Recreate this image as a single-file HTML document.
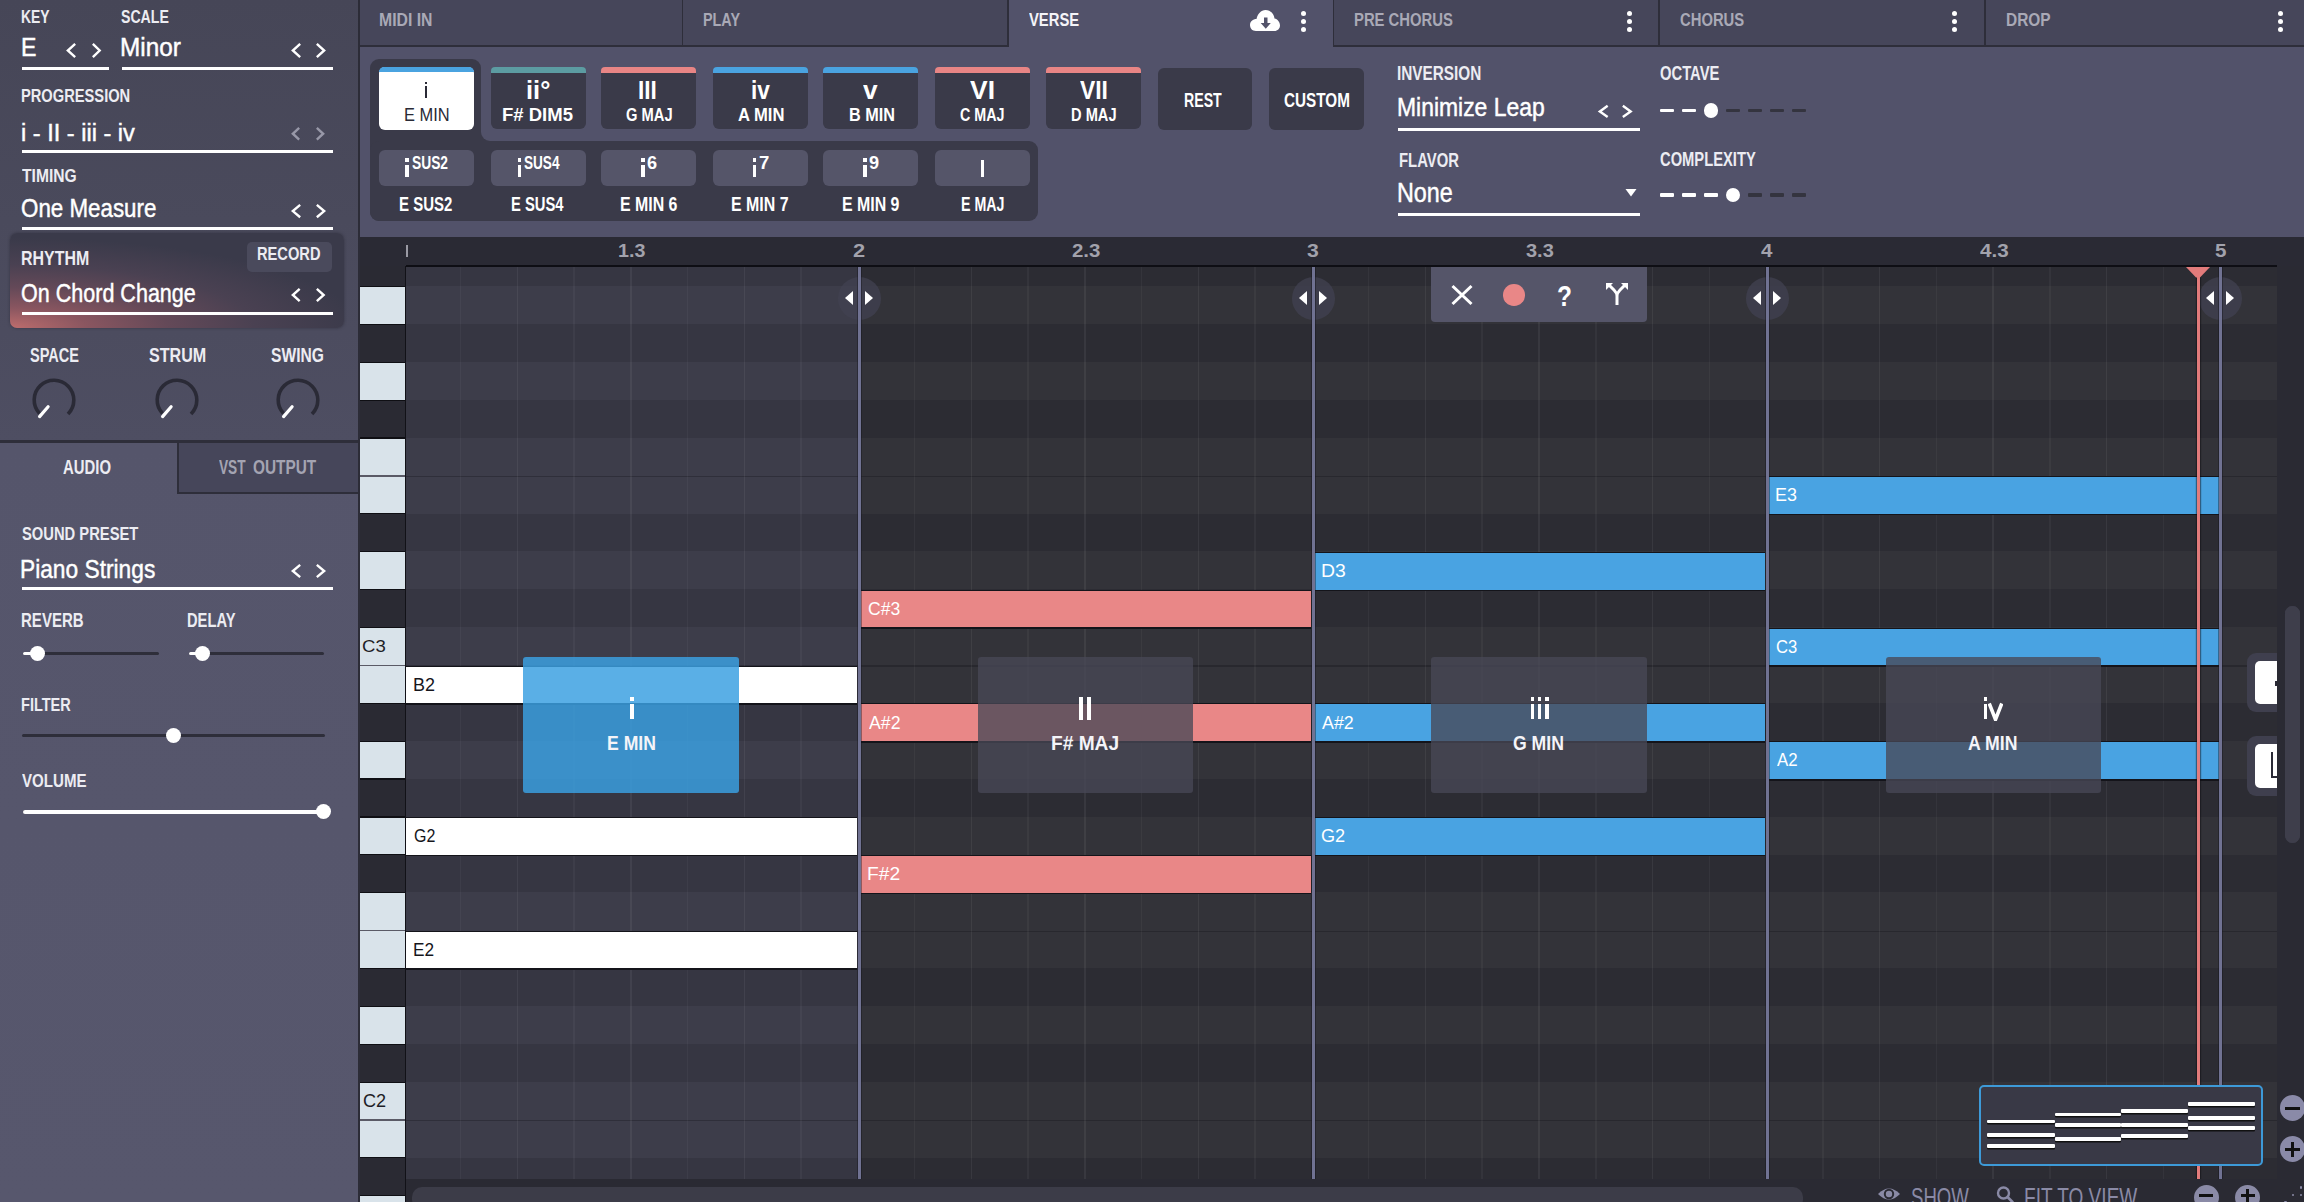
<!DOCTYPE html>
<html><head><meta charset="utf-8"><style>
html,body{margin:0;padding:0;width:2304px;height:1202px;overflow:hidden;background:#2a2a33;}
.r{position:absolute;display:block;}
.t{position:absolute;white-space:nowrap;line-height:1;font-family:"Liberation Sans",sans-serif;transform-origin:0 0;}
</style></head><body>
<div class="r" style="left:0.00px;top:0.00px;width:358.00px;height:442.00px;background:linear-gradient(to bottom,#464657 0%,#4a4a5c 50%,#4e4e62 100%);"></div>
<div class="r" style="left:0.00px;top:442.00px;width:358.00px;height:760.00px;background:linear-gradient(to bottom,#55556b 0%,#57576d 100%);"></div>
<div class="r" style="left:358.00px;top:0.00px;width:1.50px;height:1202.00px;background:#2c2c37;"></div>
<div class="t" style="left:21.49px;top:8.08px;font-size:18.26px;font-weight:bold;color:#ececf2;transform:scaleX(0.763);">KEY</div>
<div class="t" style="left:121.38px;top:8.08px;font-size:18.26px;font-weight:bold;color:#ececf2;transform:scaleX(0.774);">SCALE</div>
<div class="t" style="left:20.55px;top:34.99px;font-size:25.07px;color:#fff;transform:scaleX(0.922);-webkit-text-stroke:0.45px #fff;">E</div>
<div class="t" style="left:120.25px;top:34.99px;font-size:25.07px;color:#fff;transform:scaleX(0.970);-webkit-text-stroke:0.45px #fff;">Minor</div>
<svg class="r" style="left:65.00px;top:41.00px;" width="13.00" height="19.00" viewBox="0 0 13.00 19.00"><polyline points="10.16,2.84 2.84,9.50 10.16,16.16" fill="none" stroke="#fff" stroke-width="2.40" stroke-linecap="butt" stroke-linejoin="miter"/></svg>
<svg class="r" style="left:90.00px;top:41.00px;" width="12.50" height="19.00" viewBox="0 0 12.50 19.00"><polyline points="2.84,2.84 9.66,9.50 2.84,16.16" fill="none" stroke="#fff" stroke-width="2.40" stroke-linecap="butt" stroke-linejoin="miter"/></svg>
<div class="r" style="left:22.00px;top:67.00px;width:87.00px;height:3.00px;background:#fff;"></div>
<svg class="r" style="left:289.50px;top:41.00px;" width="13.00" height="19.00" viewBox="0 0 13.00 19.00"><polyline points="10.16,2.84 2.84,9.50 10.16,16.16" fill="none" stroke="#fff" stroke-width="2.40" stroke-linecap="butt" stroke-linejoin="miter"/></svg>
<svg class="r" style="left:313.50px;top:41.00px;" width="13.00" height="19.00" viewBox="0 0 13.00 19.00"><polyline points="2.84,2.84 10.16,9.50 2.84,16.16" fill="none" stroke="#fff" stroke-width="2.40" stroke-linecap="butt" stroke-linejoin="miter"/></svg>
<div class="r" style="left:122.00px;top:67.00px;width:210.50px;height:3.00px;background:#fff;"></div>
<div class="t" style="left:21.45px;top:86.99px;font-size:18.84px;font-weight:bold;color:#ececf2;transform:scaleX(0.779);">PROGRESSION</div>
<div class="t" style="left:20.87px;top:120.67px;font-size:23.91px;color:#fff;transform:scaleX(0.985);-webkit-text-stroke:0.45px #fff;">i - II - iii - iv</div>
<svg class="r" style="left:290.00px;top:125.00px;" width="12.00" height="17.50" viewBox="0 0 12.00 17.50"><polyline points="9.16,2.84 2.84,8.75 9.16,14.66" fill="none" stroke="#9898a8" stroke-width="2.40" stroke-linecap="butt" stroke-linejoin="miter"/></svg>
<svg class="r" style="left:314.00px;top:125.00px;" width="12.00" height="17.50" viewBox="0 0 12.00 17.50"><polyline points="2.84,2.84 9.16,8.75 2.84,14.66" fill="none" stroke="#9898a8" stroke-width="2.40" stroke-linecap="butt" stroke-linejoin="miter"/></svg>
<div class="r" style="left:22.00px;top:149.80px;width:310.50px;height:3.00px;background:#fff;"></div>
<div class="t" style="left:22.24px;top:168.15px;font-size:17.83px;font-weight:bold;color:#ececf2;transform:scaleX(0.876);">TIMING</div>
<div class="t" style="left:21.39px;top:195.92px;font-size:25.51px;color:#fff;transform:scaleX(0.876);-webkit-text-stroke:0.45px #fff;">One Measure</div>
<svg class="r" style="left:289.50px;top:201.50px;" width="13.00" height="18.10" viewBox="0 0 13.00 18.10"><polyline points="10.16,2.84 2.84,9.05 10.16,15.26" fill="none" stroke="#fff" stroke-width="2.40" stroke-linecap="butt" stroke-linejoin="miter"/></svg>
<svg class="r" style="left:313.50px;top:201.50px;" width="13.00" height="18.10" viewBox="0 0 13.00 18.10"><polyline points="2.84,2.84 10.16,9.05 2.84,15.26" fill="none" stroke="#fff" stroke-width="2.40" stroke-linecap="butt" stroke-linejoin="miter"/></svg>
<div class="r" style="left:22.00px;top:226.50px;width:310.50px;height:3.00px;background:#fff;"></div>
<div class="r" style="left:10.00px;top:233.00px;width:333.50px;height:95.00px;background:radial-gradient(ellipse 105% 95% at 0% 100%,#bd6d6d 0%,#8a5660 22%,#644958 45%,#4a4152 70%,#3a3a4a 100%);border-radius:7px;box-shadow:0 0 3px rgba(30,30,40,0.5);"></div>
<div class="t" style="left:21.36px;top:247.75px;font-size:20.29px;font-weight:bold;color:#ececf2;transform:scaleX(0.786);">RHYTHM</div>
<div class="r" style="left:246.60px;top:241.60px;width:85.40px;height:30.70px;background:#4a4a5c;border-radius:5px;"></div>
<div class="t" style="left:256.65px;top:244.99px;font-size:18.84px;font-weight:bold;color:#ececf2;transform:scaleX(0.778);">RECORD</div>
<div class="t" style="left:21.43px;top:280.87px;font-size:25.22px;color:#fff;transform:scaleX(0.854);-webkit-text-stroke:0.45px #fff;">On Chord Change</div>
<svg class="r" style="left:290.00px;top:286.00px;" width="12.50" height="18.00" viewBox="0 0 12.50 18.00"><polyline points="9.66,2.84 2.84,9.00 9.66,15.16" fill="none" stroke="#fff" stroke-width="2.40" stroke-linecap="butt" stroke-linejoin="miter"/></svg>
<svg class="r" style="left:314.00px;top:286.00px;" width="12.50" height="18.00" viewBox="0 0 12.50 18.00"><polyline points="2.84,2.84 9.66,9.00 2.84,15.16" fill="none" stroke="#fff" stroke-width="2.40" stroke-linecap="butt" stroke-linejoin="miter"/></svg>
<div class="r" style="left:22.00px;top:311.50px;width:310.50px;height:3.00px;background:#fff;"></div>
<div class="t" style="left:29.56px;top:346.29px;font-size:19.42px;font-weight:bold;color:#ececf2;transform:scaleX(0.748);">SPACE</div>
<div class="t" style="left:148.52px;top:346.29px;font-size:19.42px;font-weight:bold;color:#ececf2;transform:scaleX(0.830);">STRUM</div>
<div class="t" style="left:270.53px;top:346.29px;font-size:19.42px;font-weight:bold;color:#ececf2;transform:scaleX(0.805);">SWING</div>
<svg class="r" style="left:24.30px;top:369.70px;" width="60.00" height="60.00" viewBox="0 0 60.00 60.00"><path d="M15.52 43.50 A19.80 19.80 0 1 1 44.00 44.00" fill="none" stroke="#2a2a36" stroke-width="3.6"/><line x1="24.10" y1="36.79" x2="15.57" y2="46.60" stroke="#fff" stroke-width="3.2" stroke-linecap="round"/></svg>
<svg class="r" style="left:146.70px;top:369.70px;" width="60.00" height="60.00" viewBox="0 0 60.00 60.00"><path d="M15.52 43.50 A19.80 19.80 0 1 1 44.00 44.00" fill="none" stroke="#2a2a36" stroke-width="3.6"/><line x1="24.10" y1="36.79" x2="15.57" y2="46.60" stroke="#fff" stroke-width="3.2" stroke-linecap="round"/></svg>
<svg class="r" style="left:267.50px;top:369.70px;" width="60.00" height="60.00" viewBox="0 0 60.00 60.00"><path d="M15.52 43.50 A19.80 19.80 0 1 1 44.00 44.00" fill="none" stroke="#2a2a36" stroke-width="3.6"/><line x1="24.10" y1="36.79" x2="15.57" y2="46.60" stroke="#fff" stroke-width="3.2" stroke-linecap="round"/></svg>
<div class="r" style="left:0.00px;top:440.00px;width:358.00px;height:2.50px;background:#2e2e3a;"></div>
<div class="r" style="left:177.70px;top:442.50px;width:180.30px;height:50.50px;background:#46465a;"></div>
<div class="r" style="left:177.00px;top:442.50px;width:1.50px;height:51.50px;background:#2e2e3a;"></div>
<div class="r" style="left:177.70px;top:492.00px;width:180.30px;height:2.00px;background:#2e2e3a;"></div>
<div class="t" style="left:62.63px;top:458.49px;font-size:19.42px;font-weight:bold;color:#ececf2;transform:scaleX(0.767);">AUDIO</div>
<div class="t" style="left:218.53px;top:458.49px;font-size:19.42px;font-weight:bold;color:#a4a4b2;transform:scaleX(0.704);">VST</div>
<div class="t" style="left:253.38px;top:458.49px;font-size:19.42px;font-weight:bold;color:#a4a4b2;transform:scaleX(0.793);">OUTPUT</div>
<div class="t" style="left:21.56px;top:524.60px;font-size:18.12px;font-weight:bold;color:#ececf2;transform:scaleX(0.814);">SOUND PRESET</div>
<div class="t" style="left:20.18px;top:555.63px;font-size:26.09px;color:#fff;transform:scaleX(0.872);-webkit-text-stroke:0.45px #fff;">Piano Strings</div>
<svg class="r" style="left:289.50px;top:561.80px;" width="13.00" height="18.00" viewBox="0 0 13.00 18.00"><polyline points="10.16,2.84 2.84,9.00 10.16,15.16" fill="none" stroke="#fff" stroke-width="2.40" stroke-linecap="butt" stroke-linejoin="miter"/></svg>
<svg class="r" style="left:313.50px;top:561.80px;" width="13.00" height="18.00" viewBox="0 0 13.00 18.00"><polyline points="2.84,2.84 10.16,9.00 2.84,15.16" fill="none" stroke="#fff" stroke-width="2.40" stroke-linecap="butt" stroke-linejoin="miter"/></svg>
<div class="r" style="left:22.00px;top:587.00px;width:310.50px;height:3.00px;background:#fff;"></div>
<div class="t" style="left:21.02px;top:609.75px;font-size:20.29px;font-weight:bold;color:#ececf2;transform:scaleX(0.741);">REVERB</div>
<div class="t" style="left:186.74px;top:609.75px;font-size:20.29px;font-weight:bold;color:#ececf2;transform:scaleX(0.725);">DELAY</div>
<div class="r" style="left:23.00px;top:651.70px;width:135.70px;height:3.20px;background:#2e2e3a;border-radius:2px;"></div>
<div class="r" style="left:23.00px;top:651.50px;width:14.00px;height:3.60px;background:#fff;border-radius:2px;"></div>
<div class="r" style="left:29.50px;top:645.80px;width:15.00px;height:15.00px;background:#fff;border-radius:50%;"></div>
<div class="r" style="left:188.70px;top:651.70px;width:135.80px;height:3.20px;background:#2e2e3a;border-radius:2px;"></div>
<div class="r" style="left:188.70px;top:651.50px;width:14.00px;height:3.60px;background:#fff;border-radius:2px;"></div>
<div class="r" style="left:195.20px;top:645.80px;width:15.00px;height:15.00px;background:#fff;border-radius:50%;"></div>
<div class="t" style="left:21.46px;top:697.15px;font-size:17.83px;font-weight:bold;color:#ececf2;transform:scaleX(0.815);">FILTER</div>
<div class="r" style="left:22.40px;top:734.30px;width:302.60px;height:3.20px;background:#2e2e3a;border-radius:2px;"></div>
<div class="r" style="left:165.80px;top:728.40px;width:15.00px;height:15.00px;background:#fff;border-radius:50%;"></div>
<div class="t" style="left:21.92px;top:772.39px;font-size:18.84px;font-weight:bold;color:#ececf2;transform:scaleX(0.801);">VOLUME</div>
<div class="r" style="left:23.00px;top:810.20px;width:300.50px;height:3.20px;background:#2e2e3a;border-radius:2px;"></div>
<div class="r" style="left:23.00px;top:810.00px;width:300.50px;height:3.60px;background:#fff;border-radius:2px;"></div>
<div class="r" style="left:316.00px;top:804.30px;width:15.00px;height:15.00px;background:#fff;border-radius:50%;"></div>
<div class="r" style="left:359.50px;top:0.00px;width:1944.50px;height:45.00px;background:#46465a;"></div>
<div class="r" style="left:359.50px;top:45.00px;width:1944.50px;height:1.50px;background:#2e2e3a;"></div>
<div class="r" style="left:1008.50px;top:0.00px;width:324.50px;height:46.50px;background:#52526a;"></div>
<div class="r" style="left:681.75px;top:0.00px;width:1.50px;height:46.00px;background:#2e2e3a;"></div>
<div class="r" style="left:1007.25px;top:0.00px;width:1.50px;height:46.00px;background:#2e2e3a;"></div>
<div class="r" style="left:1332.55px;top:0.00px;width:1.50px;height:46.00px;background:#2e2e3a;"></div>
<div class="r" style="left:1658.25px;top:0.00px;width:1.50px;height:46.00px;background:#2e2e3a;"></div>
<div class="r" style="left:1984.25px;top:0.00px;width:1.50px;height:46.00px;background:#2e2e3a;"></div>
<div class="t" style="left:378.57px;top:10.44px;font-size:19.13px;font-weight:bold;color:#a9a9b6;transform:scaleX(0.825);">MIDI IN</div>
<div class="t" style="left:703.46px;top:10.44px;font-size:19.13px;font-weight:bold;color:#a9a9b6;transform:scaleX(0.752);">PLAY</div>
<div class="t" style="left:1029.13px;top:10.44px;font-size:19.13px;font-weight:bold;color:#f4f4f8;transform:scaleX(0.774);">VERSE</div>
<div class="t" style="left:1354.34px;top:10.44px;font-size:19.13px;font-weight:bold;color:#a9a9b6;transform:scaleX(0.776);">PRE CHORUS</div>
<div class="t" style="left:1680.01px;top:10.44px;font-size:19.13px;font-weight:bold;color:#a9a9b6;transform:scaleX(0.775);">CHORUS</div>
<div class="t" style="left:2005.59px;top:10.44px;font-size:19.13px;font-weight:bold;color:#a9a9b6;transform:scaleX(0.809);">DROP</div>
<div class="r" style="left:1301.20px;top:10.50px;width:5.00px;height:5.00px;background:#fff;border-radius:50%;"></div>
<div class="r" style="left:1301.20px;top:18.70px;width:5.00px;height:5.00px;background:#fff;border-radius:50%;"></div>
<div class="r" style="left:1301.20px;top:26.90px;width:5.00px;height:5.00px;background:#fff;border-radius:50%;"></div>
<div class="r" style="left:1627.00px;top:10.50px;width:5.00px;height:5.00px;background:#fff;border-radius:50%;"></div>
<div class="r" style="left:1627.00px;top:18.70px;width:5.00px;height:5.00px;background:#fff;border-radius:50%;"></div>
<div class="r" style="left:1627.00px;top:26.90px;width:5.00px;height:5.00px;background:#fff;border-radius:50%;"></div>
<div class="r" style="left:1952.20px;top:10.50px;width:5.00px;height:5.00px;background:#fff;border-radius:50%;"></div>
<div class="r" style="left:1952.20px;top:18.70px;width:5.00px;height:5.00px;background:#fff;border-radius:50%;"></div>
<div class="r" style="left:1952.20px;top:26.90px;width:5.00px;height:5.00px;background:#fff;border-radius:50%;"></div>
<div class="r" style="left:2277.90px;top:10.50px;width:5.00px;height:5.00px;background:#fff;border-radius:50%;"></div>
<div class="r" style="left:2277.90px;top:18.70px;width:5.00px;height:5.00px;background:#fff;border-radius:50%;"></div>
<div class="r" style="left:2277.90px;top:26.90px;width:5.00px;height:5.00px;background:#fff;border-radius:50%;"></div>
<svg class="r" style="left:1249.00px;top:8.00px;" width="33.00" height="25.00" viewBox="0 0 33.00 25.00"><path d="M7 23 C3 23 1 20 1 17 C1 13.5 4 11 7.5 11 C8.5 6 12 2 16.5 2 C21.5 2 25 6 25.5 10.5 C28.5 11 31 14 31 17.5 C31 20.5 28.5 23 25.5 23 Z" fill="#fff"/><path d="M15 9.5 L18.5 9.5 L18.5 15 L21.8 15 L16.75 20.8 L11.7 15 L15 15 Z" fill="#52526a"/></svg>
<div class="r" style="left:359.50px;top:46.50px;width:1944.50px;height:190.30px;background:#52526a;"></div>
<div class="r" style="left:370.20px;top:59.30px;width:111.10px;height:161.30px;background:#3a3a49;border-radius:9px;"></div>
<div class="r" style="left:370.20px;top:141.40px;width:667.80px;height:79.20px;background:#3a3a49;border-radius:9px;"></div>
<div class="r" style="left:470.00px;top:131.00px;width:20.00px;height:14.00px;background:#3a3a49;"></div>
<div class="r" style="left:481.30px;top:131.40px;width:10.00px;height:10.00px;background:#52526a;border-bottom-left-radius:9px;"></div>
<div class="r" style="left:378.50px;top:66.50px;width:95.40px;height:63.50px;background:#fff;border-radius:6px;overflow:hidden;"></div>
<div class="r" style="left:378.50px;top:66.50px;width:95.40px;height:5.50px;background:#4aa3e0;border-radius:6px 6px 0 0;"></div>
<div class="r" style="left:424.60px;top:81.50px;width:2.80px;height:2.80px;background:#2a2a36;"></div>
<div class="r" style="left:424.60px;top:86.20px;width:2.80px;height:12.00px;background:#2a2a36;"></div>
<div class="t" style="left:403.68px;top:105.91px;font-size:18.70px;color:#2a2a36;transform:scaleX(0.880);">E MIN</div>
<div class="r" style="left:490.80px;top:66.80px;width:95.40px;height:62.50px;background:#3a3a49;border-radius:6px;"></div>
<div class="r" style="left:490.80px;top:66.80px;width:95.40px;height:6.00px;background:#5c9ca2;border-radius:4px 4px 0 0;"></div>
<div class="t" style="left:525.82px;top:77.71px;font-size:24.93px;font-weight:bold;color:#fff;transform:scaleX(1.022);">ii°</div>
<div class="t" style="left:501.50px;top:105.91px;font-size:18.70px;font-weight:bold;color:#fff;transform:scaleX(0.990);">F# DIM5</div>
<div class="r" style="left:601.00px;top:66.80px;width:95.40px;height:62.50px;background:#3a3a49;border-radius:6px;"></div>
<div class="r" style="left:601.00px;top:66.80px;width:95.40px;height:6.00px;background:#e88585;border-radius:4px 4px 0 0;"></div>
<div class="t" style="left:637.93px;top:77.71px;font-size:24.93px;font-weight:bold;color:#fff;transform:scaleX(0.905);">III</div>
<div class="t" style="left:625.91px;top:105.91px;font-size:18.70px;font-weight:bold;color:#fff;transform:scaleX(0.787);">G MAJ</div>
<div class="r" style="left:712.80px;top:66.80px;width:95.40px;height:62.50px;background:#3a3a49;border-radius:6px;"></div>
<div class="r" style="left:712.80px;top:66.80px;width:95.40px;height:6.00px;background:#4aa3e0;border-radius:4px 4px 0 0;"></div>
<div class="t" style="left:751.02px;top:77.71px;font-size:24.93px;font-weight:bold;color:#fff;transform:scaleX(0.908);">iv</div>
<div class="t" style="left:737.58px;top:105.91px;font-size:18.70px;font-weight:bold;color:#fff;transform:scaleX(0.890);">A MIN</div>
<div class="r" style="left:823.00px;top:66.80px;width:95.40px;height:62.50px;background:#3a3a49;border-radius:6px;"></div>
<div class="r" style="left:823.00px;top:66.80px;width:95.40px;height:6.00px;background:#4aa3e0;border-radius:4px 4px 0 0;"></div>
<div class="t" style="left:862.77px;top:77.71px;font-size:24.93px;font-weight:bold;color:#fff;transform:scaleX(1.053);">v</div>
<div class="t" style="left:848.95px;top:105.91px;font-size:18.70px;font-weight:bold;color:#fff;transform:scaleX(0.868);">B MIN</div>
<div class="r" style="left:935.00px;top:66.80px;width:95.40px;height:62.50px;background:#3a3a49;border-radius:6px;"></div>
<div class="r" style="left:935.00px;top:66.80px;width:95.40px;height:6.00px;background:#e88585;border-radius:4px 4px 0 0;"></div>
<div class="t" style="left:970.17px;top:77.71px;font-size:24.93px;font-weight:bold;color:#fff;transform:scaleX(1.061);">VI</div>
<div class="t" style="left:959.73px;top:105.91px;font-size:18.70px;font-weight:bold;color:#fff;transform:scaleX(0.765);">C MAJ</div>
<div class="r" style="left:1045.50px;top:66.80px;width:95.40px;height:62.50px;background:#3a3a49;border-radius:6px;"></div>
<div class="r" style="left:1045.50px;top:66.80px;width:95.40px;height:6.00px;background:#e88585;border-radius:4px 4px 0 0;"></div>
<div class="t" style="left:1079.59px;top:77.71px;font-size:24.93px;font-weight:bold;color:#fff;transform:scaleX(0.917);">VII</div>
<div class="t" style="left:1070.65px;top:105.91px;font-size:18.70px;font-weight:bold;color:#fff;transform:scaleX(0.783);">D MAJ</div>
<div class="r" style="left:1157.60px;top:67.50px;width:94.00px;height:62.00px;background:#3a3a49;border-radius:6px;"></div>
<div class="t" style="left:1184.48px;top:91.42px;font-size:19.86px;font-weight:bold;color:#fff;transform:scaleX(0.712);">REST</div>
<div class="r" style="left:1269.00px;top:67.50px;width:95.00px;height:62.00px;background:#3a3a49;border-radius:6px;"></div>
<div class="t" style="left:1283.89px;top:91.42px;font-size:19.86px;font-weight:bold;color:#fff;transform:scaleX(0.769);">CUSTOM</div>
<div class="r" style="left:378.50px;top:150.40px;width:95.40px;height:35.90px;background:#555569;border-radius:6px;"></div>
<div class="r" style="left:405.45px;top:158.20px;width:3.50px;height:3.60px;background:#fff;"></div>
<div class="r" style="left:405.45px;top:164.50px;width:3.50px;height:12.50px;background:#fff;"></div>
<div class="t" style="left:411.54px;top:155.09px;font-size:17.54px;font-weight:bold;color:#fff;transform:scaleX(0.786);">SUS2</div>
<div class="t" style="left:399.03px;top:194.38px;font-size:20.72px;font-weight:bold;color:#fff;transform:scaleX(0.723);">E SUS2</div>
<div class="r" style="left:490.80px;top:150.40px;width:95.40px;height:35.90px;background:#555569;border-radius:6px;"></div>
<div class="r" style="left:517.75px;top:158.20px;width:3.50px;height:3.60px;background:#fff;"></div>
<div class="r" style="left:517.75px;top:164.50px;width:3.50px;height:12.50px;background:#fff;"></div>
<div class="t" style="left:523.84px;top:155.09px;font-size:17.54px;font-weight:bold;color:#fff;transform:scaleX(0.775);">SUS4</div>
<div class="t" style="left:511.04px;top:194.38px;font-size:20.72px;font-weight:bold;color:#fff;transform:scaleX(0.713);">E SUS4</div>
<div class="r" style="left:601.00px;top:150.40px;width:95.40px;height:35.90px;background:#555569;border-radius:6px;"></div>
<div class="r" style="left:641.05px;top:158.20px;width:3.50px;height:3.60px;background:#fff;"></div>
<div class="r" style="left:641.05px;top:164.50px;width:3.50px;height:12.50px;background:#fff;"></div>
<div class="t" style="left:646.91px;top:155.09px;font-size:17.54px;font-weight:bold;color:#fff;transform:scaleX(1.035);">6</div>
<div class="t" style="left:619.76px;top:194.38px;font-size:20.72px;font-weight:bold;color:#fff;transform:scaleX(0.768);">E MIN 6</div>
<div class="r" style="left:712.80px;top:150.40px;width:95.40px;height:35.90px;background:#555569;border-radius:6px;"></div>
<div class="r" style="left:752.85px;top:158.20px;width:3.50px;height:3.60px;background:#fff;"></div>
<div class="r" style="left:752.85px;top:164.50px;width:3.50px;height:12.50px;background:#fff;"></div>
<div class="t" style="left:758.61px;top:155.09px;font-size:17.54px;font-weight:bold;color:#fff;transform:scaleX(1.056);">7</div>
<div class="t" style="left:731.46px;top:194.38px;font-size:20.72px;font-weight:bold;color:#fff;transform:scaleX(0.770);">E MIN 7</div>
<div class="r" style="left:823.00px;top:150.40px;width:95.40px;height:35.90px;background:#555569;border-radius:6px;"></div>
<div class="r" style="left:863.05px;top:158.20px;width:3.50px;height:3.60px;background:#fff;"></div>
<div class="r" style="left:863.05px;top:164.50px;width:3.50px;height:12.50px;background:#fff;"></div>
<div class="t" style="left:868.91px;top:155.09px;font-size:17.54px;font-weight:bold;color:#fff;transform:scaleX(1.035);">9</div>
<div class="t" style="left:841.76px;top:194.38px;font-size:20.72px;font-weight:bold;color:#fff;transform:scaleX(0.768);">E MIN 9</div>
<div class="r" style="left:935.00px;top:150.40px;width:95.40px;height:35.90px;background:#555569;border-radius:6px;"></div>
<div class="r" style="left:981.10px;top:159.50px;width:3.20px;height:17.50px;background:#fff;"></div>
<div class="t" style="left:960.78px;top:194.38px;font-size:20.72px;font-weight:bold;color:#fff;transform:scaleX(0.686);">E MAJ</div>
<div class="t" style="left:1397.31px;top:63.18px;font-size:20.72px;font-weight:bold;color:#ececf2;transform:scaleX(0.739);">INVERSION</div>
<div class="t" style="left:1397.07px;top:94.89px;font-size:25.07px;color:#fff;transform:scaleX(0.914);-webkit-text-stroke:0.45px #fff;">Minimize Leap</div>
<svg class="r" style="left:1597.00px;top:102.60px;" width="13.50" height="16.90" viewBox="0 0 13.50 16.90"><polyline points="10.66,2.84 2.84,8.45 10.66,14.06" fill="none" stroke="#fff" stroke-width="2.40" stroke-linecap="butt" stroke-linejoin="miter"/></svg>
<svg class="r" style="left:1620.00px;top:102.60px;" width="13.50" height="16.90" viewBox="0 0 13.50 16.90"><polyline points="2.84,2.84 10.66,8.45 2.84,14.06" fill="none" stroke="#fff" stroke-width="2.40" stroke-linecap="butt" stroke-linejoin="miter"/></svg>
<div class="r" style="left:1398.00px;top:128.00px;width:242.00px;height:2.50px;background:#fff;"></div>
<div class="t" style="left:1399.33px;top:149.75px;font-size:20.29px;font-weight:bold;color:#ececf2;transform:scaleX(0.732);">FLAVOR</div>
<div class="t" style="left:1397.13px;top:180.49px;font-size:26.96px;color:#fff;transform:scaleX(0.866);-webkit-text-stroke:0.45px #fff;">None</div>
<svg class="r" style="left:1625.00px;top:188.00px;" width="12.00" height="10.00" viewBox="0 0 12.00 10.00"><path d="M0.5 1 L11.5 1 L6 8.5 Z" fill="#fff"/></svg>
<div class="r" style="left:1398.00px;top:213.30px;width:242.00px;height:2.50px;background:#fff;"></div>
<div class="t" style="left:1659.61px;top:63.82px;font-size:19.86px;font-weight:bold;color:#ececf2;transform:scaleX(0.744);">OCTAVE</div>
<div class="t" style="left:1659.61px;top:149.48px;font-size:20.14px;font-weight:bold;color:#ececf2;transform:scaleX(0.732);">COMPLEXITY</div>
<div class="r" style="left:1660.20px;top:108.60px;width:14.00px;height:3.60px;background:#fff;border-radius:1px;"></div>
<div class="r" style="left:1682.20px;top:108.60px;width:14.00px;height:3.60px;background:#fff;border-radius:1px;"></div>
<div class="r" style="left:1703.90px;top:103.10px;width:14.60px;height:14.60px;background:#fff;border-radius:50%;"></div>
<div class="r" style="left:1726.20px;top:108.60px;width:14.00px;height:3.60px;background:#34343f;border-radius:1px;"></div>
<div class="r" style="left:1748.20px;top:108.60px;width:14.00px;height:3.60px;background:#34343f;border-radius:1px;"></div>
<div class="r" style="left:1770.20px;top:108.60px;width:14.00px;height:3.60px;background:#34343f;border-radius:1px;"></div>
<div class="r" style="left:1792.20px;top:108.60px;width:14.00px;height:3.60px;background:#34343f;border-radius:1px;"></div>
<div class="r" style="left:1660.20px;top:193.20px;width:14.00px;height:3.60px;background:#fff;border-radius:1px;"></div>
<div class="r" style="left:1682.20px;top:193.20px;width:14.00px;height:3.60px;background:#fff;border-radius:1px;"></div>
<div class="r" style="left:1704.20px;top:193.20px;width:14.00px;height:3.60px;background:#fff;border-radius:1px;"></div>
<div class="r" style="left:1725.90px;top:187.70px;width:14.60px;height:14.60px;background:#fff;border-radius:50%;"></div>
<div class="r" style="left:1748.20px;top:193.20px;width:14.00px;height:3.60px;background:#34343f;border-radius:1px;"></div>
<div class="r" style="left:1770.20px;top:193.20px;width:14.00px;height:3.60px;background:#34343f;border-radius:1px;"></div>
<div class="r" style="left:1792.20px;top:193.20px;width:14.00px;height:3.60px;background:#34343f;border-radius:1px;"></div>
<div class="r" style="left:359.50px;top:236.80px;width:1944.50px;height:29.20px;background:#2a2a34;"></div>
<div class="r" style="left:406.00px;top:265.30px;width:1871.00px;height:1.70px;background:#0e0e14;"></div>
<div class="r" style="left:406.00px;top:244.50px;width:2.00px;height:12.90px;background:#9a9aa4;"></div>
<div class="t" style="left:618.32px;top:241.99px;font-size:18.84px;font-weight:bold;color:#a2a2ac;transform:scaleX(1.045);">1.3</div>
<div class="t" style="left:853.23px;top:241.99px;font-size:18.84px;font-weight:bold;color:#a2a2ac;transform:scaleX(1.161);">2</div>
<div class="t" style="left:1071.78px;top:241.99px;font-size:18.84px;font-weight:bold;color:#a2a2ac;transform:scaleX(1.086);">2.3</div>
<div class="t" style="left:1307.27px;top:241.99px;font-size:18.84px;font-weight:bold;color:#a2a2ac;transform:scaleX(1.126);">3</div>
<div class="t" style="left:1526.30px;top:241.99px;font-size:18.84px;font-weight:bold;color:#a2a2ac;transform:scaleX(1.062);">3.3</div>
<div class="t" style="left:1760.69px;top:241.99px;font-size:18.84px;font-weight:bold;color:#a2a2ac;transform:scaleX(1.091);">4</div>
<div class="t" style="left:1979.99px;top:241.99px;font-size:18.84px;font-weight:bold;color:#a2a2ac;transform:scaleX(1.097);">4.3</div>
<div class="t" style="left:2215.38px;top:241.99px;font-size:18.84px;font-weight:bold;color:#a2a2ac;transform:scaleX(1.093);">5</div>
<div class="r" style="left:406.00px;top:267.00px;width:453.00px;height:911.60px;background:#3d3d4a;"></div>
<div class="r" style="left:859.00px;top:267.00px;width:1418.00px;height:911.60px;background:#333339;"></div>
<div class="r" style="left:406.00px;top:267.00px;width:453.00px;height:19.30px;background:#363642;"></div>
<div class="r" style="left:859.00px;top:267.00px;width:1418.00px;height:19.30px;background:#2c2c33;"></div>
<div class="r" style="left:406.00px;top:324.19px;width:453.00px;height:37.89px;background:#363642;"></div>
<div class="r" style="left:859.00px;top:324.19px;width:1418.00px;height:37.89px;background:#2c2c33;"></div>
<div class="r" style="left:406.00px;top:399.96px;width:453.00px;height:37.89px;background:#363642;"></div>
<div class="r" style="left:859.00px;top:399.96px;width:1418.00px;height:37.89px;background:#2c2c33;"></div>
<div class="r" style="left:406.00px;top:513.62px;width:453.00px;height:37.89px;background:#363642;"></div>
<div class="r" style="left:859.00px;top:513.62px;width:1418.00px;height:37.89px;background:#2c2c33;"></div>
<div class="r" style="left:406.00px;top:589.39px;width:453.00px;height:37.89px;background:#363642;"></div>
<div class="r" style="left:859.00px;top:589.39px;width:1418.00px;height:37.89px;background:#2c2c33;"></div>
<div class="r" style="left:406.00px;top:703.05px;width:453.00px;height:37.89px;background:#363642;"></div>
<div class="r" style="left:859.00px;top:703.05px;width:1418.00px;height:37.89px;background:#2c2c33;"></div>
<div class="r" style="left:406.00px;top:778.82px;width:453.00px;height:37.89px;background:#363642;"></div>
<div class="r" style="left:859.00px;top:778.82px;width:1418.00px;height:37.89px;background:#2c2c33;"></div>
<div class="r" style="left:406.00px;top:854.59px;width:453.00px;height:37.89px;background:#363642;"></div>
<div class="r" style="left:859.00px;top:854.59px;width:1418.00px;height:37.89px;background:#2c2c33;"></div>
<div class="r" style="left:406.00px;top:968.25px;width:453.00px;height:37.89px;background:#363642;"></div>
<div class="r" style="left:859.00px;top:968.25px;width:1418.00px;height:37.89px;background:#2c2c33;"></div>
<div class="r" style="left:406.00px;top:1044.02px;width:453.00px;height:37.89px;background:#363642;"></div>
<div class="r" style="left:859.00px;top:1044.02px;width:1418.00px;height:37.89px;background:#2c2c33;"></div>
<div class="r" style="left:406.00px;top:1157.68px;width:453.00px;height:20.92px;background:#363642;"></div>
<div class="r" style="left:859.00px;top:1157.68px;width:1418.00px;height:20.92px;background:#2c2c33;"></div>
<div class="r" style="left:406.00px;top:475.93px;width:1871.00px;height:1.50px;background:rgba(20,20,26,0.32);"></div>
<div class="r" style="left:406.00px;top:665.36px;width:1871.00px;height:1.50px;background:rgba(20,20,26,0.32);"></div>
<div class="r" style="left:406.00px;top:930.56px;width:1871.00px;height:1.50px;background:rgba(20,20,26,0.32);"></div>
<div class="r" style="left:406.00px;top:1119.99px;width:1871.00px;height:1.50px;background:rgba(20,20,26,0.32);"></div>
<div class="r" style="left:459.86px;top:267.00px;width:1.50px;height:911.60px;background:rgba(255,255,255,0.04);"></div>
<div class="r" style="left:516.62px;top:267.00px;width:1.50px;height:911.60px;background:rgba(255,255,255,0.06);"></div>
<div class="r" style="left:573.37px;top:267.00px;width:1.50px;height:911.60px;background:rgba(255,255,255,0.04);"></div>
<div class="r" style="left:630.13px;top:267.00px;width:1.50px;height:911.60px;background:rgba(255,255,255,0.06);"></div>
<div class="r" style="left:686.89px;top:267.00px;width:1.50px;height:911.60px;background:rgba(255,255,255,0.04);"></div>
<div class="r" style="left:743.64px;top:267.00px;width:1.50px;height:911.60px;background:rgba(255,255,255,0.06);"></div>
<div class="r" style="left:800.40px;top:267.00px;width:1.50px;height:911.60px;background:rgba(255,255,255,0.04);"></div>
<div class="r" style="left:913.92px;top:267.00px;width:1.50px;height:911.60px;background:rgba(255,255,255,0.04);"></div>
<div class="r" style="left:970.68px;top:267.00px;width:1.50px;height:911.60px;background:rgba(255,255,255,0.06);"></div>
<div class="r" style="left:1027.43px;top:267.00px;width:1.50px;height:911.60px;background:rgba(255,255,255,0.04);"></div>
<div class="r" style="left:1084.19px;top:267.00px;width:1.50px;height:911.60px;background:rgba(255,255,255,0.06);"></div>
<div class="r" style="left:1140.95px;top:267.00px;width:1.50px;height:911.60px;background:rgba(255,255,255,0.04);"></div>
<div class="r" style="left:1197.70px;top:267.00px;width:1.50px;height:911.60px;background:rgba(255,255,255,0.06);"></div>
<div class="r" style="left:1254.46px;top:267.00px;width:1.50px;height:911.60px;background:rgba(255,255,255,0.04);"></div>
<div class="r" style="left:1367.98px;top:267.00px;width:1.50px;height:911.60px;background:rgba(255,255,255,0.04);"></div>
<div class="r" style="left:1424.74px;top:267.00px;width:1.50px;height:911.60px;background:rgba(255,255,255,0.06);"></div>
<div class="r" style="left:1481.49px;top:267.00px;width:1.50px;height:911.60px;background:rgba(255,255,255,0.04);"></div>
<div class="r" style="left:1538.25px;top:267.00px;width:1.50px;height:911.60px;background:rgba(255,255,255,0.06);"></div>
<div class="r" style="left:1595.01px;top:267.00px;width:1.50px;height:911.60px;background:rgba(255,255,255,0.04);"></div>
<div class="r" style="left:1651.76px;top:267.00px;width:1.50px;height:911.60px;background:rgba(255,255,255,0.06);"></div>
<div class="r" style="left:1708.52px;top:267.00px;width:1.50px;height:911.60px;background:rgba(255,255,255,0.04);"></div>
<div class="r" style="left:1822.04px;top:267.00px;width:1.50px;height:911.60px;background:rgba(255,255,255,0.04);"></div>
<div class="r" style="left:1878.80px;top:267.00px;width:1.50px;height:911.60px;background:rgba(255,255,255,0.06);"></div>
<div class="r" style="left:1935.55px;top:267.00px;width:1.50px;height:911.60px;background:rgba(255,255,255,0.04);"></div>
<div class="r" style="left:1992.31px;top:267.00px;width:1.50px;height:911.60px;background:rgba(255,255,255,0.06);"></div>
<div class="r" style="left:2049.07px;top:267.00px;width:1.50px;height:911.60px;background:rgba(255,255,255,0.04);"></div>
<div class="r" style="left:2105.82px;top:267.00px;width:1.50px;height:911.60px;background:rgba(255,255,255,0.06);"></div>
<div class="r" style="left:2162.58px;top:267.00px;width:1.50px;height:911.60px;background:rgba(255,255,255,0.04);"></div>
<div class="r" style="left:359.50px;top:266.00px;width:46.00px;height:936.00px;background:#2a2a33;"></div>
<div class="r" style="left:359.50px;top:285.90px;width:45.50px;height:39.09px;background:#0f0f14;"></div>
<div class="r" style="left:360.00px;top:287.10px;width:44.60px;height:36.69px;background:#d9e3ea;"></div>
<div class="r" style="left:359.50px;top:361.67px;width:45.50px;height:39.09px;background:#0f0f14;"></div>
<div class="r" style="left:360.00px;top:362.87px;width:44.60px;height:36.69px;background:#d9e3ea;"></div>
<div class="r" style="left:359.50px;top:437.44px;width:45.50px;height:39.09px;background:#0f0f14;"></div>
<div class="r" style="left:360.00px;top:438.64px;width:44.60px;height:36.69px;background:#d9e3ea;"></div>
<div class="r" style="left:359.50px;top:475.33px;width:45.50px;height:39.09px;background:#0f0f14;"></div>
<div class="r" style="left:360.00px;top:476.53px;width:44.60px;height:36.69px;background:#d9e3ea;"></div>
<div class="r" style="left:359.50px;top:551.10px;width:45.50px;height:39.09px;background:#0f0f14;"></div>
<div class="r" style="left:360.00px;top:552.30px;width:44.60px;height:36.69px;background:#d9e3ea;"></div>
<div class="r" style="left:359.50px;top:626.87px;width:45.50px;height:39.09px;background:#0f0f14;"></div>
<div class="r" style="left:360.00px;top:628.07px;width:44.60px;height:36.69px;background:#d9e3ea;"></div>
<div class="r" style="left:359.50px;top:664.76px;width:45.50px;height:39.09px;background:#0f0f14;"></div>
<div class="r" style="left:360.00px;top:665.96px;width:44.60px;height:36.69px;background:#d9e3ea;"></div>
<div class="r" style="left:359.50px;top:740.53px;width:45.50px;height:39.09px;background:#0f0f14;"></div>
<div class="r" style="left:360.00px;top:741.73px;width:44.60px;height:36.69px;background:#d9e3ea;"></div>
<div class="r" style="left:359.50px;top:816.30px;width:45.50px;height:39.09px;background:#0f0f14;"></div>
<div class="r" style="left:360.00px;top:817.50px;width:44.60px;height:36.69px;background:#d9e3ea;"></div>
<div class="r" style="left:359.50px;top:892.08px;width:45.50px;height:39.09px;background:#0f0f14;"></div>
<div class="r" style="left:360.00px;top:893.28px;width:44.60px;height:36.69px;background:#d9e3ea;"></div>
<div class="r" style="left:359.50px;top:929.96px;width:45.50px;height:39.09px;background:#0f0f14;"></div>
<div class="r" style="left:360.00px;top:931.16px;width:44.60px;height:36.69px;background:#d9e3ea;"></div>
<div class="r" style="left:359.50px;top:1005.73px;width:45.50px;height:39.09px;background:#0f0f14;"></div>
<div class="r" style="left:360.00px;top:1006.93px;width:44.60px;height:36.69px;background:#d9e3ea;"></div>
<div class="r" style="left:359.50px;top:1081.51px;width:45.50px;height:39.09px;background:#0f0f14;"></div>
<div class="r" style="left:360.00px;top:1082.71px;width:44.60px;height:36.69px;background:#d9e3ea;"></div>
<div class="r" style="left:359.50px;top:1119.39px;width:45.50px;height:39.09px;background:#0f0f14;"></div>
<div class="r" style="left:360.00px;top:1120.59px;width:44.60px;height:36.69px;background:#d9e3ea;"></div>
<div class="r" style="left:359.50px;top:1195.16px;width:45.50px;height:39.09px;background:#0f0f14;"></div>
<div class="r" style="left:360.00px;top:1196.36px;width:44.60px;height:36.69px;background:#d9e3ea;"></div>
<div class="r" style="left:359.50px;top:1270.94px;width:45.50px;height:39.09px;background:#0f0f14;"></div>
<div class="r" style="left:360.00px;top:1272.14px;width:44.60px;height:36.69px;background:#d9e3ea;"></div>
<div class="r" style="left:360.00px;top:475.33px;width:44.60px;height:1.30px;background:#5a5a66;"></div>
<div class="r" style="left:360.00px;top:664.76px;width:44.60px;height:1.30px;background:#5a5a66;"></div>
<div class="r" style="left:360.00px;top:929.96px;width:44.60px;height:1.30px;background:#5a5a66;"></div>
<div class="r" style="left:360.00px;top:1119.39px;width:44.60px;height:1.30px;background:#5a5a66;"></div>
<div class="r" style="left:404.60px;top:266.00px;width:1.60px;height:936.00px;background:#111117;"></div>
<div class="t" style="left:362.07px;top:638.26px;font-size:17.10px;color:#1e1e26;transform:scaleX(1.086);">C3</div>
<div class="t" style="left:363.29px;top:1092.23px;font-size:18.55px;color:#1e1e26;transform:scaleX(0.977);">C2</div>
<div class="r" style="left:406.20px;top:665.56px;width:451.10px;height:39.29px;background:#14141a;"></div>
<div class="r" style="left:406.20px;top:666.56px;width:451.10px;height:36.69px;background:#ffffff;"></div>
<div class="t" style="left:413.06px;top:675.62px;font-size:18.41px;color:#16161c;transform:scaleX(0.977);">B2</div>
<div class="r" style="left:406.20px;top:817.10px;width:451.10px;height:39.29px;background:#14141a;"></div>
<div class="r" style="left:406.20px;top:818.10px;width:451.10px;height:36.69px;background:#ffffff;"></div>
<div class="t" style="left:413.70px;top:827.16px;font-size:18.41px;color:#16161c;transform:scaleX(0.871);">G2</div>
<div class="r" style="left:406.20px;top:930.76px;width:451.10px;height:39.29px;background:#14141a;"></div>
<div class="r" style="left:406.20px;top:931.76px;width:451.10px;height:36.69px;background:#ffffff;"></div>
<div class="t" style="left:413.12px;top:940.82px;font-size:18.41px;color:#16161c;transform:scaleX(0.937);">E2</div>
<div class="r" style="left:860.40px;top:589.79px;width:450.80px;height:39.29px;background:#14141a;"></div>
<div class="r" style="left:860.40px;top:590.79px;width:450.80px;height:36.69px;background:#e98787;"></div>
<div class="t" style="left:867.82px;top:599.84px;font-size:18.41px;color:#fff;transform:scaleX(0.953);">C#3</div>
<div class="r" style="left:860.40px;top:703.45px;width:450.80px;height:39.29px;background:#14141a;"></div>
<div class="r" style="left:860.40px;top:704.45px;width:450.80px;height:36.69px;background:#e98787;"></div>
<div class="t" style="left:868.70px;top:713.50px;font-size:18.41px;color:#fff;transform:scaleX(0.961);">A#2</div>
<div class="r" style="left:860.40px;top:854.99px;width:450.80px;height:39.29px;background:#14141a;"></div>
<div class="r" style="left:860.40px;top:855.99px;width:450.80px;height:36.69px;background:#e98787;"></div>
<div class="t" style="left:867.16px;top:865.05px;font-size:18.41px;color:#fff;transform:scaleX(1.046);">F#2</div>
<div class="r" style="left:1314.10px;top:551.90px;width:451.40px;height:39.29px;background:#14141a;"></div>
<div class="r" style="left:1314.10px;top:552.90px;width:451.40px;height:36.69px;background:#49a3e2;"></div>
<div class="t" style="left:1320.85px;top:561.96px;font-size:18.41px;color:#fff;transform:scaleX(1.054);">D3</div>
<div class="r" style="left:1314.10px;top:703.45px;width:451.40px;height:39.29px;background:#14141a;"></div>
<div class="r" style="left:1314.10px;top:704.45px;width:451.40px;height:36.69px;background:#49a3e2;"></div>
<div class="t" style="left:1322.40px;top:713.50px;font-size:18.41px;color:#fff;transform:scaleX(0.970);">A#2</div>
<div class="r" style="left:1314.10px;top:817.10px;width:451.40px;height:39.29px;background:#14141a;"></div>
<div class="r" style="left:1314.10px;top:818.10px;width:451.40px;height:36.69px;background:#49a3e2;"></div>
<div class="t" style="left:1321.49px;top:827.16px;font-size:18.41px;color:#fff;transform:scaleX(0.985);">G2</div>
<div class="r" style="left:1768.50px;top:476.13px;width:450.00px;height:39.29px;background:#14141a;"></div>
<div class="r" style="left:1768.50px;top:477.13px;width:450.00px;height:36.69px;background:#49a3e2;"></div>
<div class="t" style="left:1775.37px;top:486.19px;font-size:18.41px;color:#fff;transform:scaleX(0.973);">E3</div>
<div class="r" style="left:1768.50px;top:627.67px;width:450.00px;height:39.29px;background:#14141a;"></div>
<div class="r" style="left:1768.50px;top:628.67px;width:450.00px;height:36.69px;background:#49a3e2;"></div>
<div class="t" style="left:1775.97px;top:637.73px;font-size:18.41px;color:#fff;transform:scaleX(0.903);">C3</div>
<div class="r" style="left:1768.50px;top:741.33px;width:450.00px;height:39.29px;background:#14141a;"></div>
<div class="r" style="left:1768.50px;top:742.33px;width:450.00px;height:36.69px;background:#49a3e2;"></div>
<div class="t" style="left:1776.80px;top:751.39px;font-size:18.41px;color:#fff;transform:scaleX(0.915);">A2</div>
<div class="r" style="left:837.80px;top:276.80px;width:43.00px;height:43.00px;background:rgba(66,66,82,0.75);border-radius:50%;"></div>
<svg class="r" style="left:843.30px;top:290.00px;" width="32.00" height="16.00" viewBox="0 0 32.00 16.00"><path d="M10 1 L10 15 L2 8 Z" fill="#fff"/><path d="M22 1 L22 15 L30 8 Z" fill="#fff"/></svg>
<div class="r" style="left:1291.70px;top:276.80px;width:43.00px;height:43.00px;background:rgba(66,66,82,0.75);border-radius:50%;"></div>
<svg class="r" style="left:1297.20px;top:290.00px;" width="32.00" height="16.00" viewBox="0 0 32.00 16.00"><path d="M10 1 L10 15 L2 8 Z" fill="#fff"/><path d="M22 1 L22 15 L30 8 Z" fill="#fff"/></svg>
<div class="r" style="left:1745.70px;top:276.80px;width:43.00px;height:43.00px;background:rgba(66,66,82,0.75);border-radius:50%;"></div>
<svg class="r" style="left:1751.20px;top:290.00px;" width="32.00" height="16.00" viewBox="0 0 32.00 16.00"><path d="M10 1 L10 15 L2 8 Z" fill="#fff"/><path d="M22 1 L22 15 L30 8 Z" fill="#fff"/></svg>
<div class="r" style="left:2198.60px;top:276.80px;width:43.00px;height:43.00px;background:rgba(66,66,82,0.75);border-radius:50%;"></div>
<svg class="r" style="left:2204.10px;top:290.00px;" width="32.00" height="16.00" viewBox="0 0 32.00 16.00"><path d="M10 1 L10 15 L2 8 Z" fill="#fff"/><path d="M22 1 L22 15 L30 8 Z" fill="#fff"/></svg>
<div class="r" style="left:856.70px;top:267.00px;width:5.20px;height:911.60px;background:rgba(18,18,24,0.4);"></div>
<div class="r" style="left:857.70px;top:267.00px;width:3.20px;height:911.60px;background:#707292;"></div>
<div class="r" style="left:1310.60px;top:267.00px;width:5.20px;height:911.60px;background:rgba(18,18,24,0.4);"></div>
<div class="r" style="left:1311.60px;top:267.00px;width:3.20px;height:911.60px;background:#707292;"></div>
<div class="r" style="left:1764.60px;top:267.00px;width:5.20px;height:911.60px;background:rgba(18,18,24,0.4);"></div>
<div class="r" style="left:1765.60px;top:267.00px;width:3.20px;height:911.60px;background:#707292;"></div>
<div class="r" style="left:2217.50px;top:267.00px;width:5.20px;height:911.60px;background:rgba(18,18,24,0.4);"></div>
<div class="r" style="left:2218.50px;top:267.00px;width:3.20px;height:911.60px;background:#707292;"></div>
<div class="r" style="left:523.00px;top:656.80px;width:216.00px;height:136.00px;background:rgba(58,160,225,0.84);border-radius:3px;"></div>
<div class="t" style="left:607.45px;top:732.86px;font-size:20.87px;font-weight:bold;color:#f4f4f8;transform:scaleX(0.844);">E MIN</div>
<div class="r" style="left:630.20px;top:697.20px;width:3.40px;height:3.80px;background:#fff;"></div>
<div class="r" style="left:630.20px;top:703.60px;width:3.40px;height:15.80px;background:#fff;"></div>
<div class="r" style="left:978.00px;top:656.80px;width:215.30px;height:136.00px;background:rgba(72,72,86,0.78);border-radius:3px;"></div>
<div class="t" style="left:1050.56px;top:732.86px;font-size:20.87px;font-weight:bold;color:#f4f4f8;transform:scaleX(0.918);">F# MAJ</div>
<div class="r" style="left:1079.40px;top:696.90px;width:3.90px;height:23.30px;background:#fff;"></div>
<div class="r" style="left:1087.00px;top:696.90px;width:3.90px;height:23.30px;background:#fff;"></div>
<div class="r" style="left:1431.00px;top:656.80px;width:215.60px;height:136.00px;background:rgba(72,72,86,0.78);border-radius:3px;"></div>
<div class="t" style="left:1513.29px;top:732.86px;font-size:20.87px;font-weight:bold;color:#f4f4f8;transform:scaleX(0.845);">G MIN</div>
<div class="r" style="left:1530.60px;top:697.20px;width:3.60px;height:3.80px;background:#fff;"></div>
<div class="r" style="left:1530.60px;top:703.60px;width:3.60px;height:15.80px;background:#fff;"></div>
<div class="r" style="left:1537.70px;top:697.20px;width:3.60px;height:3.80px;background:#fff;"></div>
<div class="r" style="left:1537.70px;top:703.60px;width:3.60px;height:15.80px;background:#fff;"></div>
<div class="r" style="left:1545.00px;top:697.20px;width:3.60px;height:3.80px;background:#fff;"></div>
<div class="r" style="left:1545.00px;top:703.60px;width:3.60px;height:15.80px;background:#fff;"></div>
<div class="r" style="left:1886.30px;top:656.80px;width:214.90px;height:136.00px;background:rgba(72,72,86,0.78);border-radius:3px;"></div>
<div class="t" style="left:1967.96px;top:732.86px;font-size:20.87px;font-weight:bold;color:#f4f4f8;transform:scaleX(0.847);">A MIN</div>
<div class="r" style="left:1983.50px;top:697.20px;width:3.60px;height:3.80px;background:#fff;"></div>
<div class="r" style="left:1983.50px;top:703.60px;width:3.60px;height:15.80px;background:#fff;"></div>
<svg class="r" style="left:1988.00px;top:702.00px;" width="15.00" height="19.00" viewBox="0 0 15.00 19.00"><path d="M1.2 1.5 L7.5 17.5 L13.8 1.5" fill="none" stroke="#fff" stroke-width="3.6"/></svg>
<div class="r" style="left:1431.00px;top:267.30px;width:215.60px;height:55.20px;background:#555569;border-radius:0 0 4px 4px;"></div>
<svg class="r" style="left:1450.00px;top:284.00px;" width="24.00" height="22.00" viewBox="0 0 24.00 22.00"><path d="M2.5 2 L21.5 20 M21.5 2 L2.5 20" stroke="#fff" stroke-width="3" stroke-linecap="butt"/></svg>
<div class="r" style="left:1503.20px;top:284.10px;width:21.60px;height:21.60px;background:#e98787;border-radius:50%;"></div>
<div class="t" style="left:1557.40px;top:280.79px;font-size:29.42px;font-weight:bold;color:#fff;transform:scaleX(0.833);">?</div>
<svg class="r" style="left:1604.00px;top:281.00px;" width="27.00" height="27.00" viewBox="0 0 27.00 27.00"><path d="M13 24 L13 15 Q13 12 10 9 L4 3 M13 15 Q13 12 16 9 L22 3" stroke="#fff" stroke-width="3" fill="none"/><path d="M2 2 L9 2 L2 9 Z" fill="#fff"/><path d="M24 2 L17 2 L24 9 Z" fill="#fff"/></svg>
<div class="r" style="left:2196.50px;top:267.00px;width:3.60px;height:911.60px;background:#e27b7b;box-shadow:0 0 0 1.2px rgba(10,10,16,0.45);"></div>
<svg class="r" style="left:2186.30px;top:267.00px;" width="24.00" height="12.00" viewBox="0 0 24.00 12.00"><path d="M0 0 L24 0 L14 10.5 L10 10.5 Z" fill="#e27b7b"/></svg>
<div class="r" style="left:2277.00px;top:267.00px;width:27.00px;height:935.00px;background:#2a2a33;"></div>
<div class="r" style="left:2285.00px;top:606.00px;width:15.00px;height:237.00px;background:#3e3e4b;border-radius:8px;"></div>
<div class="r" style="left:2246.60px;top:653.00px;width:43.40px;height:59.00px;background:#3f3f4e;border-radius:9px;"></div>
<div class="r" style="left:2254.80px;top:661.00px;width:35.20px;height:43.00px;background:#fff;border-radius:5px;"></div>
<div class="r" style="left:2246.60px;top:735.70px;width:43.40px;height:60.60px;background:#3f3f4e;border-radius:9px;"></div>
<div class="r" style="left:2254.80px;top:743.70px;width:35.20px;height:44.60px;background:#fff;border-radius:5px;"></div>
<div class="r" style="left:2274.50px;top:681.00px;width:2.50px;height:5.00px;background:#2a2a36;"></div>
<div class="r" style="left:2270.50px;top:752.00px;width:2.50px;height:26.00px;background:#2a2a36;"></div>
<div class="r" style="left:2270.50px;top:775.50px;width:6.50px;height:2.50px;background:#2a2a36;"></div>
<div class="r" style="left:2277.00px;top:640.00px;width:27.00px;height:170.00px;background:#2a2a33;"></div>
<div class="r" style="left:2285.00px;top:606.00px;width:15.00px;height:237.00px;background:#3e3e4b;border-radius:8px;"></div>
<div class="r" style="left:1978.70px;top:1085.00px;width:284.30px;height:80.50px;background:#393946;border:2.2px solid #3d9ad8;border-radius:5px;box-sizing:border-box;"></div>
<div class="r" style="left:1986.90px;top:1119.60px;width:67.90px;height:3.80px;background:#fff;box-shadow:0 1.5px 0 #111;border-radius:1px;"></div>
<div class="r" style="left:1986.90px;top:1133.30px;width:67.90px;height:3.80px;background:#fff;box-shadow:0 1.5px 0 #111;border-radius:1px;"></div>
<div class="r" style="left:1986.90px;top:1143.90px;width:67.90px;height:3.80px;background:#fff;box-shadow:0 1.5px 0 #111;border-radius:1px;"></div>
<div class="r" style="left:2054.80px;top:1112.60px;width:66.20px;height:3.80px;background:#fff;box-shadow:0 1.5px 0 #111;border-radius:1px;"></div>
<div class="r" style="left:2054.80px;top:1123.30px;width:66.20px;height:3.80px;background:#fff;box-shadow:0 1.5px 0 #111;border-radius:1px;"></div>
<div class="r" style="left:2054.80px;top:1137.10px;width:66.20px;height:3.80px;background:#fff;box-shadow:0 1.5px 0 #111;border-radius:1px;"></div>
<div class="r" style="left:2121.00px;top:1109.10px;width:66.60px;height:3.80px;background:#fff;box-shadow:0 1.5px 0 #111;border-radius:1px;"></div>
<div class="r" style="left:2121.00px;top:1123.30px;width:66.60px;height:3.80px;background:#fff;box-shadow:0 1.5px 0 #111;border-radius:1px;"></div>
<div class="r" style="left:2121.00px;top:1133.80px;width:66.60px;height:3.80px;background:#fff;box-shadow:0 1.5px 0 #111;border-radius:1px;"></div>
<div class="r" style="left:2187.60px;top:1102.40px;width:67.20px;height:3.80px;background:#fff;box-shadow:0 1.5px 0 #111;border-radius:1px;"></div>
<div class="r" style="left:2187.60px;top:1116.10px;width:67.20px;height:3.80px;background:#fff;box-shadow:0 1.5px 0 #111;border-radius:1px;"></div>
<div class="r" style="left:2187.60px;top:1126.30px;width:67.20px;height:3.80px;background:#fff;box-shadow:0 1.5px 0 #111;border-radius:1px;"></div>
<div class="r" style="left:2280.10px;top:1095.30px;width:25.40px;height:25.40px;background:#8a8aa8;border-radius:50%;"></div>
<div class="r" style="left:2285.00px;top:1106.50px;width:15.00px;height:3.00px;background:#111;"></div>
<div class="r" style="left:2280.10px;top:1136.30px;width:25.40px;height:25.40px;background:#8a8aa8;border-radius:50%;"></div>
<div class="r" style="left:2285.00px;top:1147.50px;width:15.00px;height:3.00px;background:#111;"></div>
<div class="r" style="left:2291.30px;top:1141.50px;width:3.00px;height:15.00px;background:#111;"></div>
<div class="r" style="left:406.00px;top:1178.60px;width:1871.00px;height:23.40px;background:#2a2a33;"></div>
<div class="r" style="left:412.00px;top:1187.00px;width:1391.30px;height:23.00px;background:#3c3c48;border-radius:10px;"></div>
<svg class="r" style="left:1877.00px;top:1186.00px;" width="24.00" height="16.00" viewBox="0 0 24.00 16.00"><path d="M1 8 Q12 -3 23 8 Q12 19 1 8 Z" fill="#8a8aa6"/><circle cx="12" cy="8" r="4.2" fill="none" stroke="#2a2a33" stroke-width="2"/></svg>
<div class="t" style="left:1911.16px;top:1184.33px;font-size:26.09px;color:#8a8aa6;transform:scaleX(0.714);">SHOW</div>
<svg class="r" style="left:1996.00px;top:1186.00px;" width="20.00" height="18.00" viewBox="0 0 20.00 18.00"><circle cx="7.5" cy="7" r="5.5" fill="none" stroke="#8a8aa6" stroke-width="2.4"/><path d="M11.5 11 L17 16.5" stroke="#8a8aa6" stroke-width="2.6"/></svg>
<div class="t" style="left:2024.17px;top:1184.33px;font-size:26.09px;color:#8a8aa6;transform:scaleX(0.731);">FIT TO VIEW</div>
<div class="r" style="left:2193.80px;top:1185.00px;width:24.80px;height:24.80px;background:#8a8aa6;border-radius:50%;"></div>
<div class="r" style="left:2199.20px;top:1194.00px;width:14.00px;height:3.00px;background:#111;"></div>
<div class="r" style="left:2235.10px;top:1185.00px;width:24.80px;height:24.80px;background:#8a8aa6;border-radius:50%;"></div>
<div class="r" style="left:2240.50px;top:1194.00px;width:14.00px;height:3.00px;background:#111;"></div>
<div class="r" style="left:2246.00px;top:1189.00px;width:3.00px;height:13.00px;background:#111;"></div>
<div class="r" style="left:2299.50px;top:1186.00px;width:2.60px;height:2.60px;background:#8a8aa6;border-radius:50%;"></div>
<div class="r" style="left:2299.50px;top:1193.50px;width:2.60px;height:2.60px;background:#8a8aa6;border-radius:50%;"></div>
<div class="r" style="left:2291.90px;top:1193.50px;width:2.60px;height:2.60px;background:#8a8aa6;border-radius:50%;"></div>
<div class="r" style="left:2284.30px;top:1200.70px;width:2.60px;height:2.60px;background:#8a8aa6;border-radius:50%;"></div>
</body></html>
